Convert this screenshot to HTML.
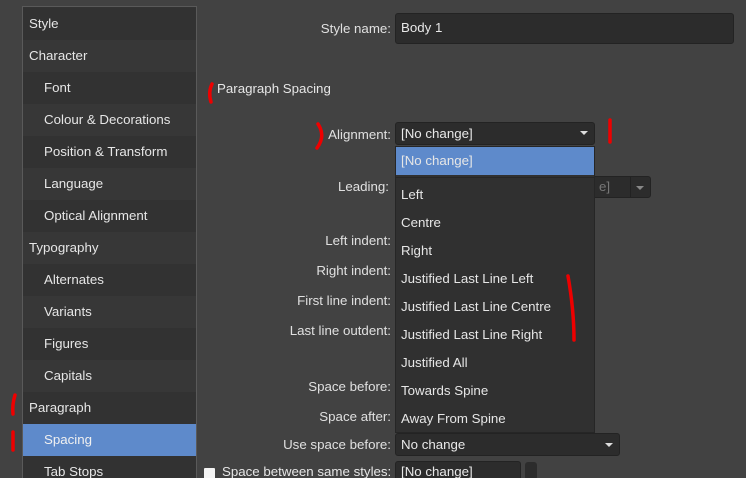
<!DOCTYPE html>
<html style="width:746px;height:478px;overflow:hidden"><head><style>
*{margin:0;padding:0;box-sizing:border-box}
body{width:746px;height:478px;overflow:hidden;background:#424242;font-family:"Liberation Sans",sans-serif;font-size:13.3px;color:#e6e6e6;position:relative}
.side{position:absolute;left:22px;top:6px;width:175px;height:472px;border:1px solid #5a5a5a;border-bottom:none;background:#333;overflow:hidden}
.row{position:absolute;left:0;width:173px;height:32px;line-height:32px;padding-left:6px}
.row.s{padding-left:21px}
.row:nth-child(odd){background:#323232}
.row:nth-child(even){background:#373737}
.row.sel{background:#5e8acb;color:#f0f0f0}
.lbl{position:absolute;text-align:right;width:200px;color:#e0e0e0}
.fld{position:absolute;background:#2c2c2c;border:1px solid #232323;border-radius:3px;color:#e8e8e8;padding-left:5px;overflow:hidden;white-space:nowrap}
.arrow{position:absolute;width:0;height:0;border-left:4px solid transparent;border-right:4px solid transparent;border-top:4px solid #ddd}
.list{position:absolute;left:395px;top:146px;width:200px;height:287px;background:#303030;border:1px solid #262626}
.it{position:absolute;left:5px;height:28px;line-height:28px;white-space:nowrap}
</style></head><body>
<div class="side">
<div class="row" style="top:1px">Style</div>
<div class="row" style="top:33px">Character</div>
<div class="row s" style="top:65px">Font</div>
<div class="row s" style="top:97px">Colour &amp; Decorations</div>
<div class="row s" style="top:129px">Position &amp; Transform</div>
<div class="row s" style="top:161px">Language</div>
<div class="row s" style="top:193px">Optical Alignment</div>
<div class="row" style="top:225px">Typography</div>
<div class="row s" style="top:257px">Alternates</div>
<div class="row s" style="top:289px">Variants</div>
<div class="row s" style="top:321px">Figures</div>
<div class="row s" style="top:353px">Capitals</div>
<div class="row" style="top:385px">Paragraph</div>
<div class="row s sel" style="top:417px">Spacing</div>
<div class="row s" style="top:449px">Tab Stops</div>
</div>

<div class="lbl" style="left:191px;top:21px">Style name:</div>
<div class="fld" style="left:395px;top:13px;width:339px;height:31px;line-height:28px">Body 1</div>
<div style="position:absolute;left:217px;top:81px">Paragraph Spacing</div>

<div class="lbl" style="left:191px;top:127px">Alignment:</div>
<div class="fld" style="left:395px;top:122px;width:200px;height:23px;line-height:21px">[No change]</div>
<div class="arrow" style="left:580px;top:131px"></div>

<div class="lbl" style="left:189px;top:179px">Leading:</div>
<div class="fld" style="left:560px;top:176px;width:91px;height:22px;line-height:20px;color:#777;padding-left:38px">e]</div>
<div style="position:absolute;left:630px;top:177px;width:1px;height:20px;background:#222"></div>
<div class="arrow" style="left:636px;top:186px;border-top-color:#888"></div>

<div class="lbl" style="left:191px;top:233px">Left indent:</div>
<div class="lbl" style="left:191px;top:263px">Right indent:</div>
<div class="lbl" style="left:191px;top:293px">First line indent:</div>
<div class="lbl" style="left:191px;top:323px">Last line outdent:</div>
<div class="lbl" style="left:191px;top:379px">Space before:</div>
<div class="lbl" style="left:191px;top:409px">Space after:</div>
<div class="lbl" style="left:191px;top:437px">Use space before:</div>
<div class="fld" style="left:395px;top:433px;width:225px;height:23px;line-height:21px">No change</div>
<div class="arrow" style="left:605px;top:443px"></div>
<div style="position:absolute;left:204px;top:468px;width:11px;height:11px;background:#f4f4f4;border-radius:1px"></div>
<div style="position:absolute;left:222px;top:464px;white-space:nowrap">Space between same styles:</div>
<div class="fld" style="left:395px;top:461px;width:126px;height:22px;line-height:20px">[No change]</div>
<div style="position:absolute;left:525px;top:462px;width:12px;height:18px;background:#2c2c2c;border-radius:3px"></div>

<div class="list">
<div style="position:absolute;left:0;top:0;width:198px;height:28px;background:#5e8acb"></div>
<div class="it" style="top:0">[No change]</div>
<div style="position:absolute;left:0;top:30px;width:198px;height:1px;background:#262626"></div>
<div class="it" style="top:34px">Left</div>
<div class="it" style="top:62px">Centre</div>
<div class="it" style="top:90px">Right</div>
<div class="it" style="top:118px">Justified Last Line Left</div>
<div class="it" style="top:146px">Justified Last Line Centre</div>
<div class="it" style="top:174px">Justified Last Line Right</div>
<div class="it" style="top:202px">Justified All</div>
<div class="it" style="top:230px">Towards Spine</div>
<div class="it" style="top:258px">Away From Spine</div>
</div>

<svg style="position:absolute;left:0;top:0" width="746" height="478" fill="none" stroke="#e00" stroke-width="3.5" stroke-linecap="round">
<path d="M212 84 Q208 92 211 102"/>
<path d="M318 124 Q326 136 317 148"/>
<path d="M610 120 L610 142"/>
<path d="M568 276 Q574 310 574 340"/>
<path d="M15 395 Q12 405 13 414"/>
<path d="M13 432 L13 450"/>
</svg>
</body></html>
